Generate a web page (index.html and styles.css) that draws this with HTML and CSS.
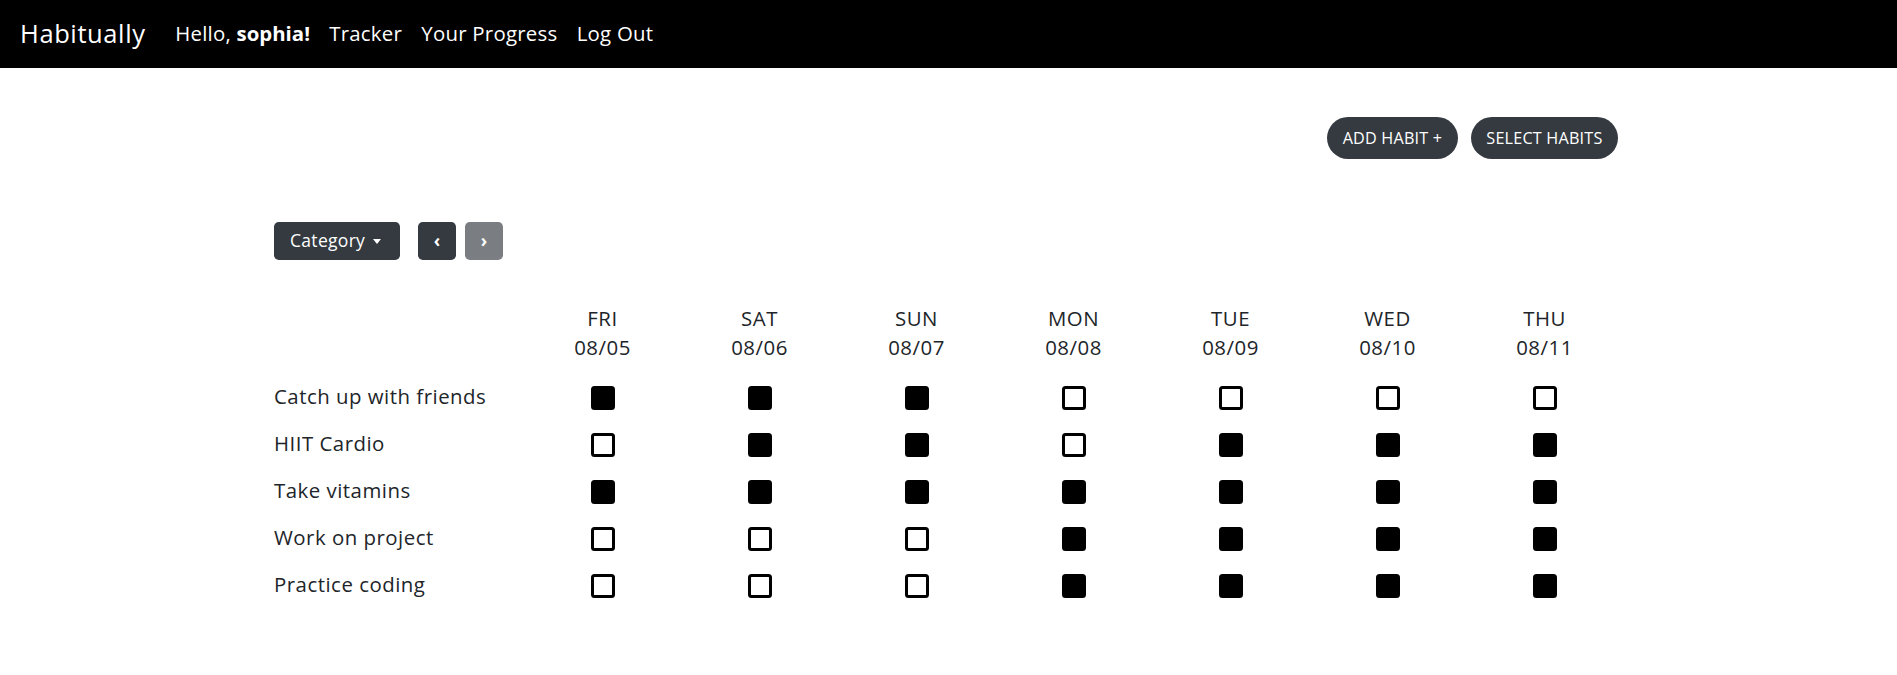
FILE: index.html
```html
<!DOCTYPE html>
<html lang="en">
<head>
<meta charset="utf-8">
<title>Habitually</title>
<link rel="stylesheet" href="styles.css">
</head>
<body>
<nav class="navbar">
  <a class="brand" href="#">Habitually</a>
  <ul class="nav">
    <li class="nav-item"><span class="nav-link">Hello, <b>sophia!</b></span></li>
    <li class="nav-item"><a class="nav-link" href="#">Tracker</a></li>
    <li class="nav-item"><a class="nav-link" href="#">Your Progress</a></li>
    <li class="nav-item"><a class="nav-link" href="#">Log Out</a></li>
  </ul>
</nav>
<main class="container">
  <div class="actions">
    <button class="pill">ADD HABIT +</button>
    <button class="pill">SELECT HABITS</button>
  </div>
  <div class="toolbar">
    <button class="btn dropdown">Category <span class="caret"></span></button>
    <div class="pager">
      <button class="btn square">&lsaquo;</button>
      <button class="btn square disabled">&rsaquo;</button>
    </div>
  </div>
  <table class="tracker">
    <colgroup>
      <col class="col-label">
      <col class="col-day"><col class="col-day"><col class="col-day"><col class="col-day"><col class="col-day"><col class="col-day"><col class="col-day">
    </colgroup>
    <thead>
      <tr>
        <th></th>
        <th>FRI<br>08/05</th>
        <th>SAT<br>08/06</th>
        <th>SUN<br>08/07</th>
        <th>MON<br>08/08</th>
        <th>TUE<br>08/09</th>
        <th>WED<br>08/10</th>
        <th>THU<br>08/11</th>
      </tr>
    </thead>
    <tbody>
      <tr>
        <td class="label">Catch up with friends</td>
        <td><span class="box on"></span></td><td><span class="box on"></span></td><td><span class="box on"></span></td>
        <td><span class="box"></span></td><td><span class="box"></span></td><td><span class="box"></span></td><td><span class="box"></span></td>
      </tr>
      <tr>
        <td class="label">HIIT Cardio</td>
        <td><span class="box"></span></td><td><span class="box on"></span></td><td><span class="box on"></span></td>
        <td><span class="box"></span></td><td><span class="box on"></span></td><td><span class="box on"></span></td><td><span class="box on"></span></td>
      </tr>
      <tr>
        <td class="label">Take vitamins</td>
        <td><span class="box on"></span></td><td><span class="box on"></span></td><td><span class="box on"></span></td>
        <td><span class="box on"></span></td><td><span class="box on"></span></td><td><span class="box on"></span></td><td><span class="box on"></span></td>
      </tr>
      <tr>
        <td class="label">Work on project</td>
        <td><span class="box"></span></td><td><span class="box"></span></td><td><span class="box"></span></td>
        <td><span class="box on"></span></td><td><span class="box on"></span></td><td><span class="box on"></span></td><td><span class="box on"></span></td>
      </tr>
      <tr>
        <td class="label">Practice coding</td>
        <td><span class="box"></span></td><td><span class="box"></span></td><td><span class="box"></span></td>
        <td><span class="box on"></span></td><td><span class="box on"></span></td><td><span class="box on"></span></td><td><span class="box on"></span></td>
      </tr>
    </tbody>
  </table>
</main>
</body>
</html>
```

FILE: styles.css
```css
* { box-sizing: border-box; }

body {
  margin: 0;
  background: #fff;
  color: #212529;
  font-family: "Open Sans", "Noto Sans", "DejaVu Sans", sans-serif;
  font-size: 20.4px;
  letter-spacing: 0.5px;
  line-height: 1.5;
}

.navbar {
  display: flex;
  align-items: center;
  height: 68px;
  padding: 0 20px 2px;
  background: #000;
}

.brand {
  color: #fff;
  text-decoration: none;
  font-size: 25.5px;
  letter-spacing: 0.6px;
  line-height: 1.5;
  margin-right: 20px;
}

.nav {
  display: flex;
  list-style: none;
  margin: 0;
  padding: 0;
}

.nav-link {
  display: block;
  padding: 0 9.6px;
  color: #fff;
  text-decoration: none;
  font-size: 20.4px;
  letter-spacing: 0.25px;
}

.nav-link b { font-weight: 700; letter-spacing: 0; }

.container {
  width: 1349px;
  margin: 0 auto;
}

.actions {
  display: flex;
  justify-content: flex-end;
  gap: 13px;
  margin-top: 49px;
  padding-right: 5px;
}

.pill {
  height: 42px;
  padding: 0 15.5px;
  border: 0;
  border-radius: 21px;
  background: #343a40;
  color: #fff;
  font-family: inherit;
  font-size: 16.2px;
  letter-spacing: 0.2px;
  line-height: 1;
}

.toolbar {
  display: flex;
  align-items: center;
  gap: 18px;
  margin-top: 63px;
}

.btn {
  height: 38px;
  border: 0;
  border-radius: 4.8px;
  background: #343a40;
  color: #fff;
  font-family: inherit;
  font-size: 17.5px;
  letter-spacing: 0.3px;
  line-height: 1;
}

.dropdown {
  display: flex;
  align-items: center;
  width: 126px;
  padding: 0 0 0 16px;
}

.caret {
  display: inline-block;
  margin-left: 8px;
  border-top: 5px solid #fff;
  border-left: 4.5px solid transparent;
  border-right: 4.5px solid transparent;
}

.pager {
  display: flex;
  gap: 9px;
}

.square {
  width: 38px;
  padding: 0;
  font-weight: 700;
}

.disabled {
  opacity: 0.65;
}

.tracker {
  margin-top: 33px;
  border-collapse: collapse;
  table-layout: fixed;
  width: 1349px;
}

.col-label { width: 250px; }
.col-day { width: 157px; }

.tracker th {
  font-weight: 400;
  text-align: center;
  line-height: 28.8px;
  padding: 11px 0 11px;
}

.tracker td {
  height: 47px;
  padding: 0;
  text-align: center;
  vertical-align: middle;
}

.tracker td.label {
  text-align: left;
}

.box {
  display: inline-block;
  width: 24px;
  height: 24px;
  border: 3px solid #000;
  border-radius: 3.5px;
  vertical-align: middle;
  background: #fff;
}

.box.on {
  background: #000;
}
```
